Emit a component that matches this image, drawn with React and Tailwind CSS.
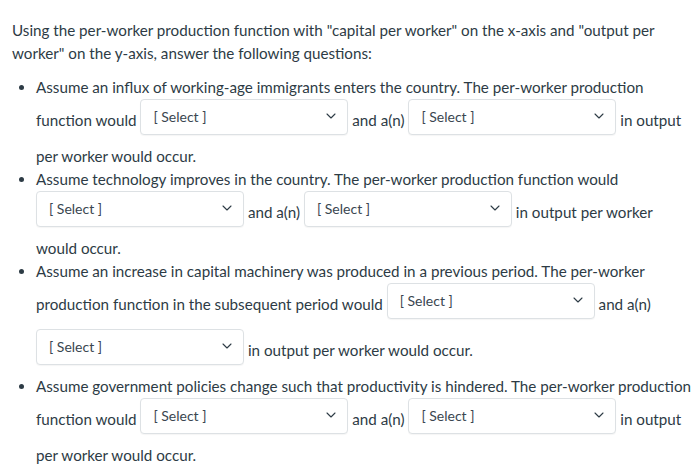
import { FiChevronDown } from 'react-icons/fi';

const Select = () => (
  <span className="inline-flex items-center justify-between w-[208px] h-[36px] mb-[10px] align-middle pl-[12px] pr-[8px] border border-[#dde1e4] rounded-[4px] bg-white text-[14px] text-[#3a4650] shadow-[0_1px_1px_rgba(0,0,0,0.04)]">
    <span className="pb-[1px]">[ Select ]</span>
    <FiChevronDown className="w-[16px] h-[16px] text-[#2d3b45] stroke-[1.6] mb-[2px]" />
  </span>
);

const questions = [
  [
    'Assume an influx of working-age immigrants enters the country. The per-worker production function would',
    'and a(n)',
    'in output per worker would occur.',
  ],
  [
    'Assume technology improves in the country. The per-worker production function would',
    'and a(n)',
    'in output per worker would occur.',
  ],
  [
    'Assume an increase in capital machinery was produced in a previous period. The per-worker production function in the subsequent period would',
    'and a(n)',
    'in output per worker would occur.',
  ],
  [
    'Assume government policies change such that productivity is hindered. The per-worker production function would',
    'and a(n)',
    'in output per worker would occur.',
  ],
];

export default function App() {
  return (
    <div
      className="w-[700px] h-[476px] bg-white pl-[12px] pr-[6px] pt-[19px] text-[15.2px] leading-[23px] text-[#2d3b45] overflow-hidden"
      style={{ fontFamily: 'Lato, "Open Sans", sans-serif' }}
    >
      <p>
        Using the per-worker production function with "capital per worker" on the x-axis and "output per
        worker" on the y-axis, answer the following questions:
      </p>
      <ul className="list-disc pl-[24px] mt-[11px]">
        {questions.map(([a, b, c], i) => (
          <li key={i}>
            {a} <Select /> {b} <Select /> {c}
          </li>
        ))}
      </ul>
    </div>
  );
}
